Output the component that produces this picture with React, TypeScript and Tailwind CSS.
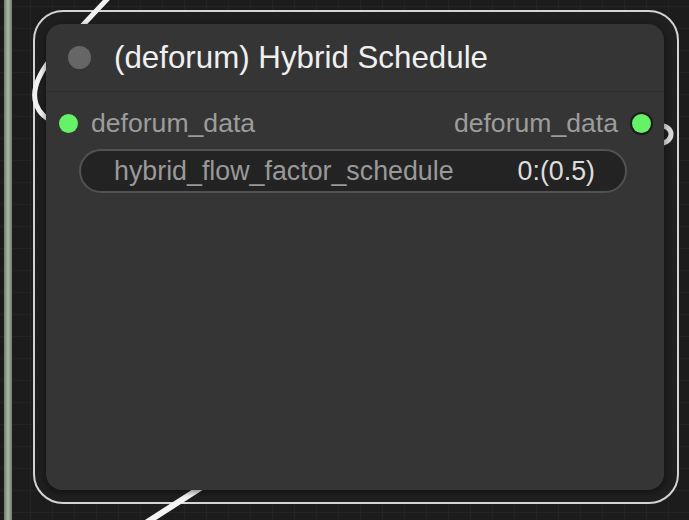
import React from "react";

const font = { fontFamily: '"Liberation Sans", Arial, sans-serif' };

function Dot({ ring = false }: { ring?: boolean }) {
  return (
    <span
      className={`block w-[19px] h-[19px] rounded-full bg-[#66f266] ${ring ? "ring-2 ring-[#1b1b1b]" : ""}`}
    />
  );
}

export default function App() {
  return (
    <div className="relative w-[689px] h-[520px] overflow-hidden bg-[#1c1c1c]" style={font}>
      {/* canvas grid + background wires */}
      <svg className="absolute inset-0" width="689" height="520">
        <defs>
          <pattern id="grid" width="22" height="22" patternUnits="userSpaceOnUse" x="8" y="6">
            <path d="M 22 0 L 0 0 0 22" fill="none" stroke="#252525" strokeWidth="1.5" />
          </pattern>
          <linearGradient id="green" x1="0" x2="1" y1="0" y2="0">
            <stop offset="0" stopColor="#6f7d6c" />
            <stop offset="0.5" stopColor="#a9b9a5" />
            <stop offset="1" stopColor="#6f7d6c" />
          </linearGradient>
        </defs>
        <rect width="689" height="520" fill="url(#grid)" />
        <rect x="4" y="0" width="8" height="520" fill="url(#green)" />
      </svg>

      {/* selection outline */}
      <div className="absolute left-[33px] top-[10px] w-[646px] h-[494px] rounded-[30px] border-2 border-[#d4d4d4] bg-[#1f1f1f]" />

      {/* wires over the outline, under the node */}
      <svg className="absolute inset-0" width="689" height="520">
        <path
          d="M 112 -6 L 50 60 Q 30 86 36 104 Q 41 118 56 122"
          fill="none"
          stroke="#f2f2f2"
          strokeWidth="5"
          strokeLinecap="round"
        />
        <path d="M 138 528 L 222 474" fill="none" stroke="#f4f4f4" strokeWidth="6" />
        <path
          d="M 655 124 Q 671 126 671 134 Q 671 143 655 145"
          fill="none"
          stroke="#d8d8d8"
          strokeWidth="5"
        />
      </svg>

      {/* node */}
      <div className="absolute left-[46px] top-[24px] w-[618px] h-[466px] rounded-[16px] bg-[#353535] shadow-[0_2px_6px_rgba(0,0,0,0.5)] flex flex-col">
        <div className="h-[68px] flex items-center pl-[22px] gap-[23px] border-b border-[#2d2d2d]">
          <span className="block w-[23px] h-[23px] rounded-full bg-[#666666]" />
          <span className="text-[31.3px] leading-none text-[#f0f0f0]">(deforum) Hybrid Schedule</span>
        </div>

        <div className="mt-[14px] h-[34px] flex items-center justify-between pl-[13px] pr-[13px]">
          <div className="flex items-center gap-[13px]">
            <Dot />
            <span className="text-[26.6px] leading-none text-[#9c9c9c]">deforum_data</span>
          </div>
          <div className="flex items-center gap-[14px]">
            <span className="text-[26.6px] leading-none text-[#9c9c9c]">deforum_data</span>
            <Dot ring />
          </div>
        </div>

        <div className="mt-[9px] ml-[33px] w-[548px] h-[44px] rounded-full border-2 border-[#525252] bg-[#232323] flex items-center justify-between pl-[33px] pr-[30px]">
          <span className="text-[26.8px] leading-none text-[#999999]">hybrid_flow_factor_schedule</span>
          <span className="text-[26.8px] leading-none text-[#dddddd]">0:(0.5)</span>
        </div>
      </div>
    </div>
  );
}
